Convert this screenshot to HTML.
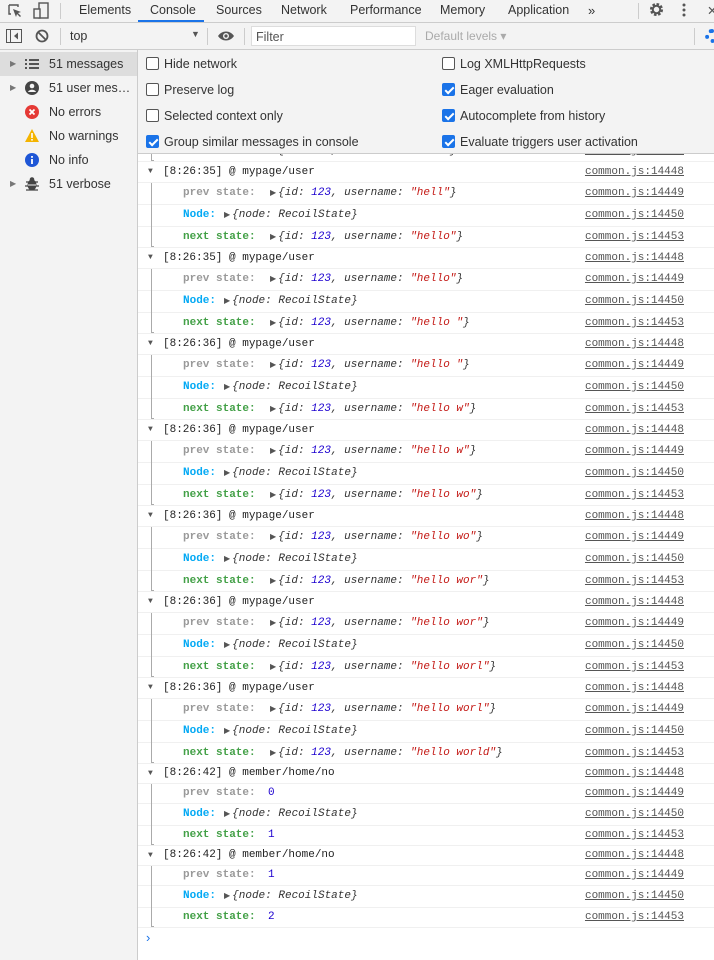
<!DOCTYPE html>
<html><head><meta charset="utf-8"><style>
*{box-sizing:border-box;margin:0;padding:0}
body{width:714px;height:960px;overflow:hidden;background:#fff;font-family:"Liberation Sans",sans-serif;font-size:12px;color:#333;position:relative}
.abs{position:absolute}
#tabs{position:absolute;left:0;top:0;width:714px;height:23px;background:#f3f3f3;border-bottom:1px solid #ccc}
#tabs .t{position:absolute;top:3px;font-size:12.5px;color:#333}
#tb{position:absolute;left:0;top:23px;width:714px;height:27px;background:#f3f3f3;border-bottom:1px solid #ccc}
#side{position:absolute;left:0;top:50px;width:138px;height:910px;background:#f3f3f3;border-right:1px solid #ccc}
.si{position:absolute;left:0;width:137px;height:24px;line-height:24px;font-size:12.5px;color:#333;white-space:nowrap}
.si .tx{position:absolute;left:49px;width:86px;overflow:hidden;text-overflow:ellipsis;white-space:nowrap}
.si .ar{position:absolute;left:10px;top:0;font-size:8px;color:#777}
#panel{position:absolute;left:138px;top:50px;width:576px;height:104px;background:#f3f3f3;border-bottom:1px solid #ccc;z-index:5}
.cb{position:absolute;font-size:12.5px;color:#333;height:14px;line-height:14px;white-space:nowrap}
.cb i{position:absolute;left:-18px;top:0;width:13px;height:13px;border:1px solid #555;border-radius:2px;background:#fff}
.cb i.on{background:#1a73e8;border-color:#1a73e8}
.cb i.on:after{content:"";position:absolute;left:3.5px;top:0.5px;width:3px;height:7px;border:solid #fff;border-width:0 2px 2px 0;transform:rotate(45deg)}
#con{position:absolute;left:138px;top:0;width:576px;height:960px;font-family:"Liberation Mono",monospace;font-size:11px}
.r{position:absolute;left:0;width:576px;border-bottom:1px solid #f0f0f0}
.r > span{position:absolute;white-space:pre}
.lk{right:30px;color:#555;text-decoration:underline}
.h{left:25px;color:#222}
.lb{left:45px;font-weight:bold}
.pv{color:#999}.nd{color:#03a9f4}.nx{color:#43a047}
.o{font-style:italic;color:#333}
.n{color:#1c00cf}.s{color:#c41a16}
.tri{font-size:8px;color:#555;font-style:normal;margin-right:2px}
.br{position:absolute;left:13px;width:3px;border-left:1px solid #aaa;border-bottom:1px solid #aaa}
</style></head><body>
<div id="tabs">
<svg class="abs" style="left:7px;top:3px" width="16" height="16" viewBox="0 0 16 16"><path d="M2 2h9v2M2 2v9h2" fill="none" stroke="#555" stroke-width="1.4"/><path d="M6 6l8 3-3 1 3 3-1 1-3-3-1 3z" fill="#555"/></svg>
<svg class="abs" style="left:33px;top:2px" width="16" height="17" viewBox="0 0 16 17"><rect x="6" y="1" width="9" height="15" fill="none" stroke="#555" stroke-width="1.4"/><rect x="1" y="7" width="6" height="9" fill="#f3f3f3" stroke="#555" stroke-width="1.4"/></svg>
<div class="abs" style="left:60px;top:3px;width:1px;height:16px;background:#ccc"></div>
<span class="t" style="left:79px">Elements</span>
<span class="t" style="left:150px">Console</span>
<div class="abs" style="left:138px;top:20px;width:66px;height:2px;background:#1a73e8"></div>
<span class="t" style="left:216px">Sources</span>
<span class="t" style="left:281px">Network</span>
<span class="t" style="left:350px">Performance</span>
<span class="t" style="left:440px">Memory</span>
<span class="t" style="left:508px">Application</span>
<span class="t" style="left:588px;font-size:13px">»</span>
<div class="abs" style="left:638px;top:3px;width:1px;height:16px;background:#ccc"></div>
<svg class="abs" style="left:649px;top:2px" width="15" height="15" viewBox="0 0 16 16"><circle cx="8" cy="8" r="5.5" fill="none" stroke="#555" stroke-width="3" stroke-dasharray="2.6 1.7"/><circle cx="8" cy="8" r="4" fill="none" stroke="#555" stroke-width="2.2"/></svg>
<svg class="abs" style="left:682px;top:2px" width="4" height="16"><circle cx="2" cy="3" r="1.5" fill="#555"/><circle cx="2" cy="8" r="1.5" fill="#555"/><circle cx="2" cy="13" r="1.5" fill="#555"/></svg>
<span class="t" style="left:707px;color:#555">✕</span>
</div>
<div id="tb">
<svg class="abs" style="left:6px;top:6px" width="16" height="14"><rect x="0.5" y="0.5" width="15" height="13" fill="none" stroke="#555"/><line x1="4.5" y1="1" x2="4.5" y2="13" stroke="#555"/><path d="M12 3.5v7l-4-3.5z" fill="#555"/></svg>
<svg class="abs" style="left:35px;top:6px" width="14" height="14"><circle cx="7" cy="7" r="5.5" fill="none" stroke="#555" stroke-width="1.8"/><line x1="3" y1="3" x2="11" y2="11" stroke="#555" stroke-width="1.8"/></svg>
<div class="abs" style="left:60px;top:5px;width:1px;height:17px;background:#ccc"></div>
<span class="abs" style="left:70px;top:6px;font-size:12.5px">top</span>
<span class="abs" style="left:191px;top:6px;font-size:9px;color:#555">▼</span>
<div class="abs" style="left:207px;top:5px;width:1px;height:17px;background:#ccc"></div>
<svg class="abs" style="left:217px;top:7px" width="18" height="12"><path d="M1 6C5 0 13 0 17 6C13 12 5 12 1 6z" fill="#555"/><circle cx="9" cy="6" r="3" fill="#f3f3f3"/><circle cx="9" cy="6" r="1.6" fill="#555"/></svg>
<div class="abs" style="left:244px;top:5px;width:1px;height:17px;background:#ccc"></div>
<div class="abs" style="left:251px;top:3px;width:165px;height:20px;background:#fff;border:1px solid #ddd"></div>
<span class="abs" style="left:256px;top:7px;font-size:12.5px;color:#555">Filter</span>
<span class="abs" style="left:425px;top:6px;font-size:12px;color:#aaa">Default levels ▾</span>
<div class="abs" style="left:694px;top:5px;width:1px;height:17px;background:#ccc"></div>
<div class="abs" style="left:705px;top:6px;width:14px;height:14px;border-radius:50%;border:4px dotted #1a73e8"></div>
</div>
<div id="side">
<div class="si" style="top:2px;background:#ddd"><span class="ar">▶</span>
<svg class="abs" style="left:25px;top:7px" width="14" height="10"><g fill="#555"><rect x="0" y="0" width="2" height="2"/><rect x="0" y="4" width="2" height="2"/><rect x="0" y="8" width="2" height="2"/><rect x="4" y="0" width="10" height="2"/><rect x="4" y="4" width="10" height="2"/><rect x="4" y="8" width="10" height="2"/></g></svg><span class="tx">51 messages</span></div>
<div class="si" style="top:26px"><span class="ar">▶</span>
<svg class="abs" style="left:25px;top:5px" width="14" height="14"><circle cx="7" cy="7" r="7" fill="#444"/><circle cx="7" cy="5" r="2.3" fill="#f3f3f3"/><path d="M3 11c1-3 7-3 8 0" fill="#f3f3f3"/></svg><span class="tx">51 user messages</span></div>
<div class="si" style="top:50px"><svg class="abs" style="left:25px;top:5px" width="14" height="14"><circle cx="7" cy="7" r="7" fill="#e53935"/><path d="M4.5 4.5l5 5M9.5 4.5l-5 5" stroke="#fff" stroke-width="1.8"/></svg><span class="tx">No errors</span></div>
<div class="si" style="top:74px"><svg class="abs" style="left:25px;top:5px" width="14" height="13"><path d="M7 0L14 13H0z" fill="#f4b400"/><rect x="6.2" y="4" width="1.6" height="5" fill="#fff"/><rect x="6.2" y="10" width="1.6" height="1.6" fill="#fff"/></svg><span class="tx">No warnings</span></div>
<div class="si" style="top:98px"><svg class="abs" style="left:25px;top:5px" width="14" height="14"><circle cx="7" cy="7" r="7" fill="#1e56d6"/><rect x="6.1" y="6" width="1.8" height="5" fill="#fff"/><rect x="6.1" y="3" width="1.8" height="1.8" fill="#fff"/></svg><span class="tx">No info</span></div>
<div class="si" style="top:122px"><span class="ar">▶</span>
<svg class="abs" style="left:25px;top:5px" width="14" height="14"><ellipse cx="7" cy="8" rx="4.5" ry="5.5" fill="#444"/><circle cx="7" cy="2.5" r="2.3" fill="#444"/><path d="M1 5h12M0 9h14M1 13h12" stroke="#444" stroke-width="1.3"/><path d="M3 8h8" stroke="#f3f3f3" stroke-width="1"/></svg><span class="tx">51 verbose</span></div>
</div>
<div id="panel">
<span class="cb" style="left:26px;top:7px"><i></i>Hide network</span>
<span class="cb" style="left:26px;top:33px"><i></i>Preserve log</span>
<span class="cb" style="left:26px;top:59px"><i></i>Selected context only</span>
<span class="cb" style="left:26px;top:85px"><i class="on"></i>Group similar messages in console</span>
<span class="cb" style="left:322px;top:7px"><i></i>Log XMLHttpRequests</span>
<span class="cb" style="left:322px;top:33px"><i class="on"></i>Eager evaluation</span>
<span class="cb" style="left:322px;top:59px"><i class="on"></i>Autocomplete from history</span>
<span class="cb" style="left:322px;top:85px"><i class="on"></i>Evaluate triggers user activation</span>
</div>
<div id="con">
<div class="r" style="top:140px;height:22px;line-height:22px"><span class="lb nx">next state:</span><span class="o" style="left:132px"><span class="tri">▶</span>{id: <b class="n" style="font-weight:normal">123</b>, username: <b class="s" style="font-weight:normal">"hell"</b>}</span><span class="lk">common.js:14453</span></div>
<div class="br" style="top:140px;height:21px"></div>
<div id="groups"></div>
<div class="abs" style="left:8px;top:930px;color:#1a73e8;font-size:13px;font-family:'Liberation Sans',sans-serif">›</div>
</div>
<script>
var g=document.getElementById('groups');var h='';
var data=[["8:26:35","mypage/user","hell","hello"],["8:26:35","mypage/user","hello","hello "],["8:26:36","mypage/user","hello ","hello w"],["8:26:36","mypage/user","hello w","hello wo"],["8:26:36","mypage/user","hello wo","hello wor"],["8:26:36","mypage/user","hello wor","hello worl"],["8:26:36","mypage/user","hello worl","hello world"],["8:26:42","member/home/no",0,1],["8:26:42","member/home/no",1,2]];
var y=162;
function obj(s){return '<span class="tri">▶</span>{id: <b class="n" style="font-weight:normal">123</b>, username: <b class="s" style="font-weight:normal">"'+s+'"</b>}';}
function row(top,ht,inner,link){return '<div class="r" style="top:'+top+'px;height:'+ht+'px;line-height:'+(ht-1)+'px">'+inner+'<span class="lk">common.js:'+link+'</span></div>';}
data.forEach(function(d){
 var num=typeof d[2]=='number';
 var hh=num?[20,20,22,20]:[21,22,22,21];
 var t=y;
 h+=row(t,hh[0],'<span class="tri" style="left:10px;top:0">▼</span><span class="h">['+d[0]+'] @ '+d[1]+'</span>',14448);t+=hh[0];
 var bt=t;
 h+=row(t,hh[1],'<span class="lb pv">prev state:</span>'+(num?'<span class="n" style="left:130px">'+d[2]+'</span>':'<span class="o" style="left:132px">'+obj(d[2])+'</span>'),14449);t+=hh[1];
 h+=row(t,hh[2],'<span class="lb nd">Node:</span><span class="o" style="left:86px"><span class="tri">▶</span>{node: RecoilState}</span>',14450);t+=hh[2];
 h+=row(t,hh[3],'<span class="lb nx">next state:</span>'+(num?'<span class="n" style="left:130px">'+d[3]+'</span>':'<span class="o" style="left:132px">'+obj(d[3])+'</span>'),14453);t+=hh[3];
 h+='<div class="br" style="top:'+bt+'px;height:'+(t-bt-1)+'px"></div>';
 y=t;
});
g.innerHTML=h;
</script>
</body></html>
